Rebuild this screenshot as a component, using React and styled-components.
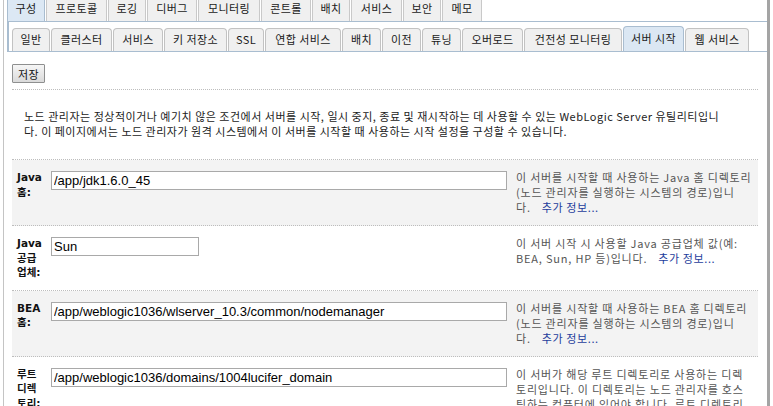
import styled, { createGlobalStyle } from "styled-components";

const GlobalStyle = createGlobalStyle`
  html, body {
    margin: 0;
    padding: 0;
    background: #fff;
    font-family: "Noto Sans CJK KR", "Noto Sans", sans-serif;
    font-size: 11px;
    color: #222;
  }
`;

const Frame = styled.div`
  margin-left: 3px;
  width: 763px;
  height: 406px;
  overflow: hidden;
  border-left: 1px solid #c4c4c4;
  border-right: 3px solid #a4a4a4;
`;

const TopTabs = styled.div`
  display: flex;
  height: 21px;
  padding-left: 3px;
`;

const TopTab = styled.div`
  box-sizing: border-box;
  width: ${(p) => p.w}px;
  height: 21px;
  margin-right: 1px;
  border: 1px solid ${(p) => (p.active ? "#a9bdd0" : "#c9c9c9")};
  border-top: none;
  border-bottom: none;
  background: ${(p) => (p.active ? "#dce8f4" : "#f0f0f0")};
  text-align: center;
  line-height: 16px;
  font-size: 11px;
  letter-spacing: 0.4px;
  color: #1a1a1a;
`;

const SubBox = styled.div`
  margin-left: 3px;
  height: 29px;
  display: flex;
  align-items: flex-end;
  padding-left: 3px;
  border-top: 1px solid #a9bdd0;
  border-bottom: 1px solid #a9bdd0;
  border-left: 2px solid #a9bdd0;
`;

const SubTab = styled.div`
  box-sizing: border-box;
  width: ${(p) => p.w}px;
  height: ${(p) => (p.active ? 25 : 23)}px;
  margin-right: 1px;
  border: 1px solid ${(p) => (p.active ? "#a9bdd0" : "#c2c2c2")};
  border-bottom: none;
  border-radius: 4px 4px 0 0;
  background: ${(p) => (p.active ? "#dbe7f3" : "#f0f0f0")};
  text-align: center;
  line-height: ${(p) => (p.active ? 23 : 21)}px;
  font-size: 11px;
  letter-spacing: 0.4px;
  color: #1a1a1a;
  white-space: nowrap;
`;

const Panel = styled.div`
  padding: 12px 9px 0 8px;
`;

const Toolbar = styled.div`
  padding-bottom: 6px;
  border-bottom: 1px dotted #bdbdbd;
`;

const SaveButton = styled.button`
  box-sizing: border-box;
  width: 33px;
  height: 19px;
  padding: 0;
  border: 1px solid #8e8f8f;
  border-radius: 1px;
  background: linear-gradient(#f6f6f6, #dadada);
  font-family: "Noto Sans CJK KR", sans-serif;
  font-size: 11px;
  letter-spacing: 0.4px;
  line-height: 16px;
  color: #111;
  display: block;
`;

const Intro = styled.div`
  padding: 19px 12px 20px;
  border-bottom: 1px dotted #bdbdbd;
  font-size: 11px;
  letter-spacing: 0.5px;
  line-height: 15px;
  white-space: nowrap;
  color: #222;
`;

const FieldRow = styled.div`
  display: grid;
  grid-template-columns: 30px 461px 1fr;
  column-gap: 4px;
  padding: 10px 0 10px 5px;
  background: ${(p) => (p.shaded ? "#f3f3f3" : "#fff")};
  border-bottom: 1px dotted #bdbdbd;
`;

const Label = styled.div`
  font-family: "DejaVu Sans", "Noto Sans CJK KR", sans-serif;
  font-weight: bold;
  font-size: 10.5px;
  line-height: 14.5px;
  color: #111;
  white-space: nowrap;
`;

const TextInput = styled.input`
  box-sizing: border-box;
  width: ${(p) => p.w}px;
  height: 19px;
  margin-top: 1px;
  padding: 0 2px;
  border: 1px solid #a9a9a9;
  background: #fff;
  font-family: "Liberation Sans", Arial, sans-serif;
  font-size: 13px;
  color: #000;
  outline: none;
`;

const Help = styled.div`
  font-size: 11px;
  letter-spacing: 0.8px;
  line-height: 15px;
  color: #555;
  white-space: nowrap;
`;

const MoreLink = styled.a`
  margin-left: 11px;
  letter-spacing: 0.6px;
  color: #1e3d9c;
  text-decoration: none;
`;

const topTabs = [
  { label: "구성", w: 38, active: true },
  { label: "프로토콜", w: 61 },
  { label: "로깅", w: 38 },
  { label: "디버그", w: 50 },
  { label: "모니터링", w: 62 },
  { label: "콘트롤", w: 50 },
  { label: "배치", w: 38 },
  { label: "서비스", w: 51 },
  { label: "보안", w: 38 },
  { label: "메모", w: 40 },
];

const subTabs = [
  { label: "일반", w: 38 },
  { label: "클러스터", w: 61 },
  { label: "서비스", w: 50 },
  { label: "키 저장소", w: 63 },
  { label: "SSL", w: 36 },
  { label: "연합 서비스", w: 76 },
  { label: "배치", w: 39 },
  { label: "이전", w: 39 },
  { label: "튜닝", w: 39 },
  { label: "오버로드", w: 61 },
  { label: "건전성 모니터링", w: 98 },
  { label: "서버 시작", w: 61, active: true },
  { label: "웹 서비스", w: 64 },
];

const fields = [
  {
    label: ["Java", "홈:"],
    value: "/app/jdk1.6.0_45",
    w: 456,
    help: [
      "이 서버를 시작할 때 사용하는 Java 홈 디렉토리",
      "(노드 관리자를 실행하는 시스템의 경로)입니",
      "다.",
    ],
    more: true,
  },
  {
    label: ["Java", "공급", "업체:"],
    value: "Sun",
    w: 148,
    help: ["이 서버 시작 시 사용할 Java 공급업체 값(예:", "BEA, Sun, HP 등)입니다."],
    more: true,
  },
  {
    label: ["BEA", "홈:"],
    value: "/app/weblogic1036/wlserver_10.3/common/nodemanager",
    w: 456,
    help: [
      "이 서버를 시작할 때 사용하는 BEA 홈 디렉토리",
      "(노드 관리자를 실행하는 시스템의 경로)입니",
      "다.",
    ],
    more: true,
  },
  {
    label: ["루트", "디렉", "토리:"],
    value: "/app/weblogic1036/domains/1004lucifer_domain",
    w: 456,
    help: [
      "이 서버가 해당 루트 디렉토리로 사용하는 디렉",
      "토리입니다. 이 디렉토리는 노드 관리자를 호스",
      "팅하는 컴퓨터에 있어야 합니다. 루트 디렉토리",
    ],
  },
];

export default function App() {
  return (
    <>
      <GlobalStyle />
      <Frame>
        <TopTabs>
          {topTabs.map((t) => (
            <TopTab key={t.label} w={t.w} active={t.active}>
              {t.label}
            </TopTab>
          ))}
        </TopTabs>
        <SubBox>
          {subTabs.map((t) => (
            <SubTab key={t.label} w={t.w} active={t.active}>
              {t.label}
            </SubTab>
          ))}
        </SubBox>
        <Panel>
          <Toolbar>
            <SaveButton>저장</SaveButton>
          </Toolbar>
          <Intro>
            노드 관리자는 정상적이거나 예기치 않은 조건에서 서버를 시작, 일시 중지, 종료 및 재시작하는 데 사용할 수 있는 WebLogic Server 유틸리티입니
            <br />
            다. 이 페이지에서는 노드 관리자가 원격 시스템에서 이 서버를 시작할 때 사용하는 시작 설정을 구성할 수 있습니다.
          </Intro>
          {fields.map((f, i) => (
            <FieldRow key={f.value} shaded={i % 2 === 0}>
              <Label>
                {f.label.map((l) => (
                  <div key={l}>{l}</div>
                ))}
              </Label>
              <div>
                <TextInput w={f.w} defaultValue={f.value} />
              </div>
              <Help>
                {f.help.map((line, j) => (
                  <div key={j}>
                    {line}
                    {f.more && j === f.help.length - 1 && (
                      <MoreLink href="#">추가 정보...</MoreLink>
                    )}
                  </div>
                ))}
              </Help>
            </FieldRow>
          ))}
        </Panel>
      </Frame>
    </>
  );
}
